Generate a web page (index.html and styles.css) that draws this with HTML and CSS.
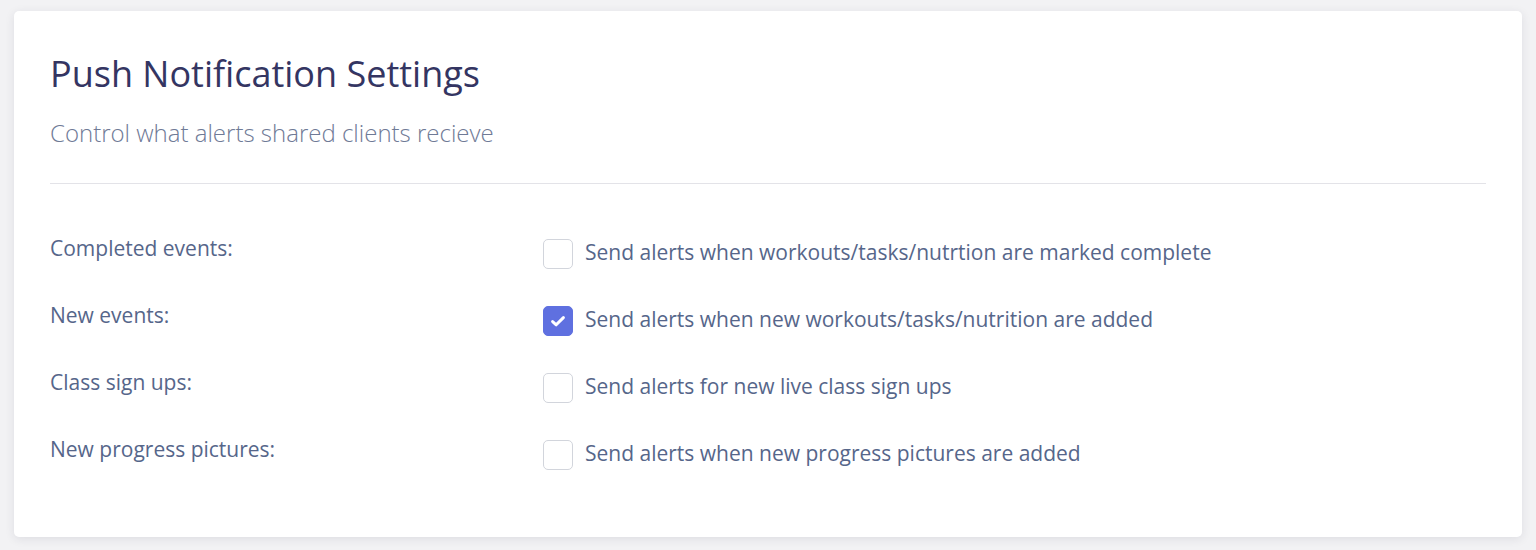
FILE: index.html
```html
<!DOCTYPE html>
<html>
<head>
<meta charset="utf-8">
<link rel="stylesheet" href="styles.css">
</head>
<body>
<div class="card">
  <h1 class="title">Push Notification Settings</h1>
  <p class="subtitle">Control what alerts shared clients recieve</p>
  <hr class="divider">
  <div class="rows">
    <div class="row">
      <div class="label">Completed events:</div>
      <label class="option"><span class="box"></span><span class="text">Send alerts when workouts/tasks/nutrtion are marked complete</span></label>
    </div>
    <div class="row">
      <div class="label">New events:</div>
      <label class="option"><span class="box checked"><svg viewBox="0 0 16 16" width="16" height="16"><path d="M2.6 8.6 L6.2 11.8 L13.4 4.6" fill="none" stroke="#fff" stroke-width="3" stroke-linecap="round" stroke-linejoin="round"/></svg></span><span class="text">Send alerts when new workouts/tasks/nutrition are added</span></label>
    </div>
    <div class="row">
      <div class="label">Class sign ups:</div>
      <label class="option"><span class="box"></span><span class="text">Send alerts for new live class sign ups</span></label>
    </div>
    <div class="row">
      <div class="label">New progress pictures:</div>
      <label class="option"><span class="box"></span><span class="text">Send alerts when new progress pictures are added</span></label>
    </div>
  </div>
</div>
</body>
</html>
```

FILE: styles.css
```css
html, body {
  margin: 0;
  padding: 0;
}
body {
  background: #f2f2f4;
  font-family: "Open Sans", "Noto Sans", sans-serif;
  height: 550px;
  overflow: hidden;
}
.card {
  margin: 11px 14px 0 14px;
  height: 526px;
  box-sizing: border-box;
  background: #fff;
  border-radius: 5px;
  box-shadow: 0 2px 10px rgba(40, 40, 70, 0.10);
  padding: 39px 36px 0 36px;
}
.title {
  margin: 0;
  font-size: 36px;
  line-height: 48px;
  font-weight: 400;
  color: #343562;
}
.subtitle {
  margin: 19px 0 0 0;
  font-size: 24px;
  line-height: 32px;
  font-weight: 300;
  color: #6f7a96;
}
.divider {
  margin: 34px 0 0 0;
  border: 0;
  height: 1px;
  background: #e3e3e8;
}
.rows {
  margin-top: 50px;
  display: flex;
  flex-direction: column;
  gap: 37px;
}
.row {
  display: flex;
  align-items: flex-start;
  height: 30px;
}
.label {
  width: 493px;
  font-size: 21px;
  line-height: 28px;
  color: #56668a;
}
.option {
  display: flex;
  align-items: flex-start;
  gap: 12px;
  margin-top: 5px;
}
.box {
  width: 28px;
  height: 28px;
  border: 1px solid #d2d5dc;
  border-radius: 5px;
  background: #fff;
  display: flex;
  align-items: center;
  justify-content: center;
  flex: none;
}
.box.checked {
  background: #5f70e0;
  border-color: #5f70e0;
}
.text {
  font-size: 21px;
  line-height: 26px;
  color: #56668a;
}
```
